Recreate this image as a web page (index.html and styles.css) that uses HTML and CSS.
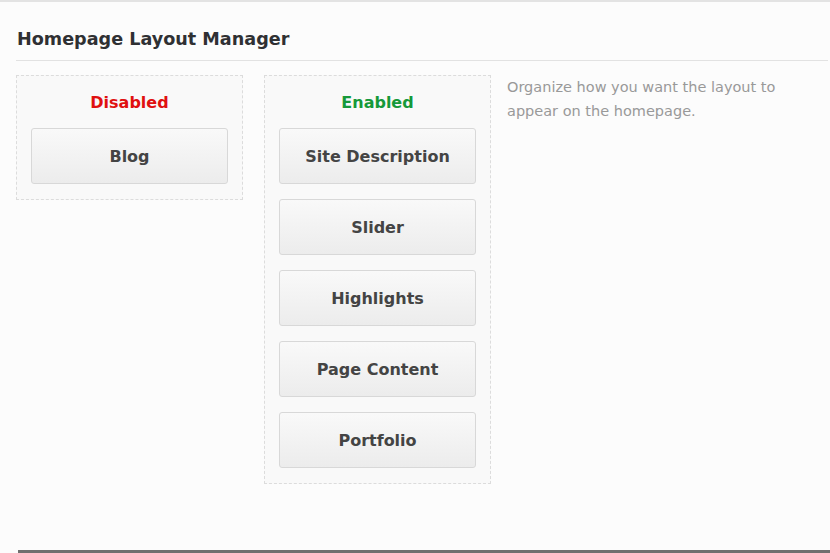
FILE: index.html
```html
<!DOCTYPE html>
<html lang="en">
<head>
  <meta charset="UTF-8" />
  <title>Homepage Layout Manager</title>
  <link rel="stylesheet" href="styles.css">
</head>
<body>

  <div class="panel">
    <h2 class="panel-title">Homepage Layout Manager</h2>

    <div class="layout">
      <div class="block-list">
        <div class="list-label disabled">Disabled</div>
        <div class="block">Blog</div>
      </div>

      <div class="block-list">
        <div class="list-label enabled">Enabled</div>
        <div class="block">Site Description</div>
        <div class="block">Slider</div>
        <div class="block">Highlights</div>
        <div class="block">Page Content</div>
        <div class="block">Portfolio</div>
      </div>

      <p class="hint">Organize how you want the layout to appear on the homepage.</p>
    </div>
  </div>

</body>
</html>
```

FILE: styles.css
```css
html, body {
  height: 100%;
}

body {
  margin: 0;
  font-family: "DejaVu Sans", Verdana, sans-serif;
  background: #fcfcfc;
  color: #333;
}

.panel {
  box-sizing: border-box;
  height: 553px;
  padding: 0 2px 0 16px;
  border-top: 2px solid #e3e3e3;
  position: relative;
}

.panel::after {
  content: "";
  position: absolute;
  left: 18px;
  right: 0;
  bottom: 0;
  height: 3px;
  background: #6f6f6f;
}

.panel-title {
  margin: 0;
  padding: 27px 0 10px 1px;
  font-size: 17.6px;
  line-height: 21px;
  font-weight: bold;
  color: #2f3033;
  border-bottom: 1px solid #e2e2e2;
}

.layout {
  display: flex;
  align-items: flex-start;
  gap: 21px;
  margin-top: 14px;
}

.block-list {
  box-sizing: border-box;
  width: 227px;
  padding: 16px 14px 15px;
  border: 1px dashed #dcdcdc;
  background: #f9f9f9;
  display: flex;
  flex-direction: column;
  gap: 15px;
}

.list-label {
  text-align: center;
  font-size: 16px;
  font-weight: bold;
  line-height: 22px;
  margin-bottom: -1px;
}

.disabled {
  color: #e01010;
}

.enabled {
  color: #16993a;
}

.block {
  height: 56px;
  display: flex;
  align-items: center;
  justify-content: center;
  border: 1px solid #d8d8d8;
  border-radius: 3px;
  background: linear-gradient(to bottom, #f9f9f9, #ececec);
  font-size: 16px;
  font-weight: bold;
  color: #444;
  box-sizing: border-box;
}

.hint {
  margin: 0 0 0 -5px;
  width: 300px;
  font-size: 14.5px;
  line-height: 24px;
  color: #999;
}
```
